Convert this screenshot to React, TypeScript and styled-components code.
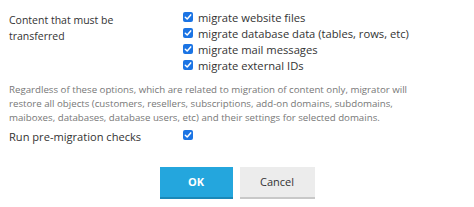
import React from "react";
import styled, { createGlobalStyle } from "styled-components";

const Global = createGlobalStyle`
  html, body { margin: 0; padding: 0; background: #fff; }
  body { font-family: "Open Sans", "Liberation Sans", sans-serif; color: #333; }
`;

const Page = styled.div`
  padding: 9px 0 0 9px;
  width: 474px;
  box-sizing: border-box;
`;

const FieldRow = styled.div<{ $mt?: number }>`
  display: grid;
  grid-template-columns: 174px 1fr;
  margin-top: ${(p) => p.$mt ?? 0}px;
`;

const Label = styled.div<{ $pt?: number; $size?: number }>`
  font-size: ${(p) => p.$size ?? 11}px;
  line-height: 15.5px;
  color: #333;
  padding-top: ${(p) => p.$pt ?? 0}px;
`;

const OptionList = styled.div`
  display: flex;
  flex-direction: column;
`;

const Option = styled.label`
  display: flex;
  align-items: center;
  gap: 5px;
  height: 16px;
  font-size: 11.2px;
  color: #333;
  white-space: nowrap;
`;

const Box = styled.span`
  display: inline-flex;
  align-items: center;
  justify-content: center;
  width: 10px;
  height: 10px;
  border-radius: 2px;
  background: #1b74e4;
  flex: none;
`;

const Note = styled.p`
  margin: 10px 0 0 0;
  font-size: 9.7px;
  line-height: 14px;
  color: #777;
  width: 412px;
`;

const Buttons = styled.div`
  display: flex;
  justify-content: center;
  gap: 7px;
  margin-top: 22px;
  margin-left: -9px;
`;

const Button = styled.button<{ $primary?: boolean }>`
  height: 32px;
  width: ${(p) => (p.$primary ? 73 : 75)}px;
  border: none;
  border-bottom: 2px solid ${(p) => (p.$primary ? "#1a88b8" : "#c8c8c8")};
  background: ${(p) => (p.$primary ? "#24a6dd" : "#ececec")};
  color: ${(p) => (p.$primary ? "#fff" : "#333")};
  font-family: "Open Sans", "Liberation Sans", sans-serif;
  font-weight: ${(p) => (p.$primary ? 700 : 400)};
  font-size: 11px;
  padding: 0;
`;

const Check = () => (
  <Box>
    <svg width="8" height="8" viewBox="0 0 8 8">
      <path d="M1.3 4.2 L3.2 6 L6.7 1.9" fill="none" stroke="#fff" strokeWidth="1.5" strokeLinecap="round" strokeLinejoin="round" />
    </svg>
  </Box>
);

const options = [
  "migrate website files",
  "migrate database data (tables, rows, etc)",
  "migrate mail messages",
  "migrate external IDs",
];

export default function App() {
  return (
    <Page>
      <Global />
      <FieldRow>
        <Label $pt={4} $size={10.5}>
          Content that must be
          <br />
          transferred
        </Label>
        <OptionList>
          {options.map((o) => (
            <Option key={o}>
              <Check />
              {o}
            </Option>
          ))}
        </OptionList>
      </FieldRow>
      <Note>
        Regardless of these options, which are related to migration of content only, migrator will restore all objects
        (customers, resellers, subscriptions, add-on domains, subdomains, maiboxes, databases, database users, etc) and
        their settings for selected domains.
      </Note>
      <FieldRow $mt={2}>
        <Label $pt={2} $size={11.1}>Run pre-migration checks</Label>
        <OptionList>
          <Option>
            <Check />
          </Option>
        </OptionList>
      </FieldRow>
      <Buttons>
        <Button $primary>OK</Button>
        <Button>Cancel</Button>
      </Buttons>
    </Page>
  );
}
